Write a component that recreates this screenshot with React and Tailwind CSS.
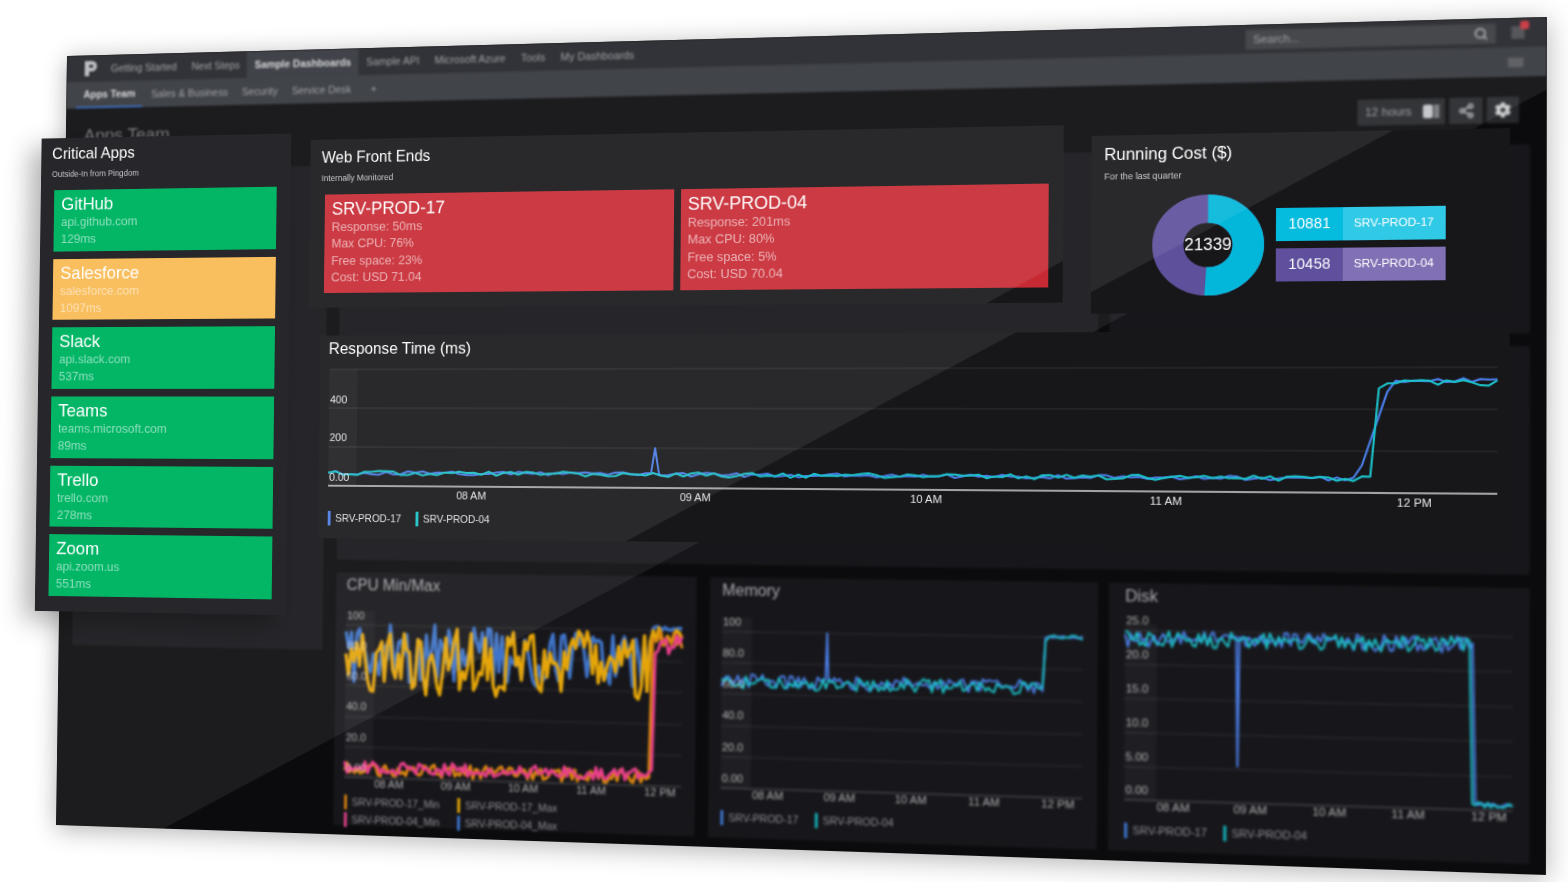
import React from 'react';
import { Search, Share2 } from 'lucide-react';
import { FaCog } from 'react-icons/fa';

// the whole dashboard is laid out flat, then tilted into the reference quad
const SCENE =
  'absolute left-0 top-0 w-[1480px] h-[810px] origin-top-left [transform:matrix3d(0.89196,-0.02754,0,-0.00006982,-0.01405,0.94247,0,-0.00000837,0,0,1,0,67,56,0,1)]';

const APPS = [
  { name: 'GitHub', host: 'api.github.com', ms: '129ms', tone: 'bg-[#02b666]' },
  { name: 'Salesforce', host: 'salesforce.com', ms: '1097ms', tone: 'bg-[#f9be5d]' },
  { name: 'Slack', host: 'api.slack.com', ms: '537ms', tone: 'bg-[#02b666]' },
  { name: 'Teams', host: 'teams.microsoft.com', ms: '89ms', tone: 'bg-[#02b666]' },
  { name: 'Trello', host: 'trello.com', ms: '278ms', tone: 'bg-[#02b666]' },
  { name: 'Zoom', host: 'api.zoom.us', ms: '551ms', tone: 'bg-[#02b666]' },
];

const SERVERS = [
  { name: 'SRV-PROD-17', lines: ['Response: 50ms', 'Max CPU: 76%', 'Free space: 23%', 'Cost: USD 71.04'] },
  { name: 'SRV-PROD-04', lines: ['Response: 201ms', 'Max CPU: 80%', 'Free space: 5%', 'Cost: USD 70.04'] },
];

const BLUE = '#4a7de6';
const TEAL = '#1cc0c8';

const rng = (seed) => {
  let s = seed;
  const next = () => (s = (s * 16807) % 2147483647) / 2147483647;
  next();
  next();
  return next;
};

const series = (seed, n, w, fn) => {
  const r = rng(seed);
  return Array.from({ length: n }, (_, i) => {
    const t = i / (n - 1);
    return [+(t * w).toFixed(1), +fn(t, r).toFixed(1)];
  });
};

const spike = (points, x, peak, width = 4) => {
  const before = points.filter((p) => p[0] < x - width);
  const after = points.filter((p) => p[0] > x + width);
  const base = before[before.length - 1][1];
  return [...before, [x - width, base], [x, peak], [x + width, base], ...after];
};

const lerp = (a, b, t) => a + (b - a) * t;

const responseBlue = spike(
  series(91231, 150, 1145, (t, r) => {
    if (t < 0.889) return 106.500 + (r() - 0.5) * 4;
    if (t < 0.916) return lerp(106.500, 12, (t - 0.889) / 0.027);
    return 12 + (r() - 0.4) * 4;
  }),
  340,
  80
);
const responseTeal = series(44021, 150, 1145, (t, r) => {
  if (t < 0.9) return 106.500 + (r() - 0.5) * 5;
  if (t < 0.907) return 20;
  return 15 + (r() - 0.5) * 6;
});

const cpuBlue = series(7741, 120, 348, (t, r) => (t < 0.91 ? 12 + r() * 62 : 10 + r() * 4));
const cpuAmber = series(31337, 120, 348, (t, r) => (t < 0.91 ? 16 + r() * 68 : 11 + r() * 14));
const cpuOrange = series(5501, 130, 348, (t, r) => (t < 0.91 ? 155 + r() * 13 : 14 + r() * 18));
const cpuPink = series(2287, 130, 348, (t, r) => (t < 0.915 ? 153 + r() * 13 : 14 + r() * 24));

const memBlue = spike(
  series(66123, 130, 353, (t, r) => (t < 0.897 ? 63 + (r() - 0.5) * 14 : 14 + (r() - 0.5) * 3)),
  105,
  14,
  1.5
);
const memTeal = series(18211, 130, 353, (t, r) => (t < 0.897 ? 64 + (r() - 0.5) * 14 : t < 0.905 ? 18 : 14 + (r() - 0.5) * 4));

const diskBlue = spike(
  series(52177, 130, 357, (t, r) => (t < 0.905 ? 14 + (r() - 0.5) * 16 : 165 + (r() - 0.5) * 5)),
  106,
  135,
  1.5
);
const diskTeal = series(83009, 130, 357, (t, r) => (t < 0.897 ? 14 + (r() - 0.5) * 16 : 165 + (r() - 0.5) * 5));

const toPoints = (pts) => pts.map((p) => p.join(',')).join(' ');

function Chart({ w, h, grids, axis, ticks, times, labelY, lines, gutter, strong }) {
  return (
    <svg width={w} height={h} className="block overflow-visible">
      <rect x="0" y="0" width={gutter} height={axis} fill="#ffffff" fillOpacity="0.035" />
      {grids.map((y) => (
        <line key={y} x1="0" x2={w} y1={y} y2={y} stroke="#ffffff" strokeOpacity="0.11" />
      ))}
      <line x1="0" x2={w} y1={axis} y2={axis} stroke="#ffffff" strokeOpacity={strong ? 0.8 : 0.28} strokeWidth={strong ? 1.6 : 1} />
      {lines.map((l) => (
        <polyline key={l.color} points={toPoints(l.points)} fill="none" stroke={l.color} strokeWidth={l.width} strokeLinejoin="round" />
      ))}
      {ticks.map((t) => (
        <text key={t.label} x="1" y={t.y} dominantBaseline="middle" fontSize="11" fill="#e5e5e7" fillOpacity={strong ? 1 : 0.7}>
          {t.label}
        </text>
      ))}
      {times.map((x, i) => (
        <text key={x} x={x} y={labelY} textAnchor="middle" dominantBaseline="middle" fontSize="11" fill="#e5e5e7" fillOpacity={strong ? 1 : 0.7}>
          {['08 AM', '09 AM', '10 AM', '11 AM', '12 PM'][i]}
        </text>
      ))}
    </svg>
  );
}

function Legend({ color, label, dim, className }) {
  return (
    <div className={`flex items-center gap-[5px] text-[10.5px] leading-none ${dim ? 'text-[#8f8f93]' : 'text-[#e2e2e4]'} ${className || ''}`}>
      <span className={`block w-[3px] h-[15px] ${color}`} />
      {label}
    </div>
  );
}

const BOTTOM_GRIDS = [14, 45, 76, 108, 139];
const bottomTicks = (labels) => labels.map((label, i) => ({ label, y: [5, 36, 67, 98, 130, 161][i] }));

function SmallPanel({ title, width, offset, children, legend }) {
  return (
    <div className={`h-[259px] ${width} bg-[#17171b] pt-[3px] ${offset}`}>
      <h3 className="text-[16px] leading-[20px] text-[#a9a9ad] h-[37px]">{title}</h3>
      {children}
      {legend}
    </div>
  );
}

function BackWindow() {
  return (
    <div className="absolute inset-0 overflow-hidden bg-[#0b0b0d] shadow-[0_4px_24px_rgba(0,0,0,0.3)]">
      <div className="relative h-full blur-[1.2px]">
        <div className="flex h-[28px] bg-[#24252a] text-[10.8px] text-[#9a9ca1] items-center pl-[18px] pr-[20px]">
          <svg width="17" height="18" viewBox="0 0 17 18" className="mr-[6px] shrink-0">
            <path d="M2 1h8a5.500 5.500 0 0 1 0 11H7v5H2z M7 5v3h3a1.500 1.500 0 0 0 0-3z" fill="#b9babd" fillRule="evenodd" />
          </svg>
          <span className="px-[8px]">Getting Started</span>
          <span className="px-[8px]">Next Steps</span>
          <span className="h-full flex items-center bg-[#33363c] px-[8px] font-bold text-[#d4d5d8]">Sample Dashboards</span>
          <span className="px-[8px]">Sample API</span>
          <span className="px-[8px]">Microsoft Azure</span>
          <span className="px-[8px]">Tools</span>
          <span className="px-[8px]">My Dashboards</span>
          <div className="ml-auto w-[230px] h-[19px] mr-[1px] bg-[#3a3b40] flex items-center justify-between px-[7px] text-[#9a9ca1]">
            Search...
            <Search size={13} strokeWidth={3} className="text-[#a9aaad]" />
          </div>
          <div className="relative ml-[13px] w-[12px] h-[12px] bg-[#4a4b50]">
            <span className="absolute -top-[5px] left-[8px] w-[8px] h-[8px] rounded-[2px] bg-[#c8323c]" />
          </div>
        </div>
        <div className="flex h-[28px] bg-[#34373d] text-[10.8px] text-[#9a9ca1] items-center pl-[11px] pr-[21px]">
          <span className="h-full flex items-center px-[8px] font-bold text-[#d4d5d8] border-b-2 border-[#2f62b8]">Apps Team</span>
          <span className="px-[7.500px] ml-[2px]">Sales &amp; Business</span>
          <span className="px-[7.500px]">Security</span>
          <span className="px-[7.500px]">Service Desk</span>
          <span className="px-[7.500px] ml-[6px]">+</span>
          <span className="ml-auto w-[14px] h-[9px] bg-[#55575c]" />
        </div>

        <div className="px-[15px]">
          <div className="flex justify-between h-[65px] pt-[19px] pr-[10px]">
            <h2 className="ml-[5px] text-[19px] leading-[20px] text-[#77777b]">Apps Team</h2>
            <div className="flex gap-[4px] h-[25px] text-[#b4b5b8]">
              <div className="w-[80px] bg-[#26272b] flex items-center justify-between pl-[7px] pr-[5px] text-[11px] text-[#9a9ca1]">
                12 hours
                <span className="flex h-[13px] gap-[1px]">
                  <span className="block w-[9px] bg-[#c4c5c8] rounded-[2px]" />
                  <span className="block w-[5px] bg-[#77787c]" />
                </span>
              </div>
              <div className="w-[30px] bg-[#26272b] flex items-center justify-center">
                <Share2 size={15} strokeWidth={2.4} />
              </div>
              <div className="w-[29px] bg-[#26272b] flex items-center justify-center">
                <FaCog size={15} className="text-[#cfd0d2]" />
              </div>
            </div>
          </div>

          <div className="flex gap-[14px]">
            <div className="w-[273px] h-[500px] bg-[#17171b]" />
            <div className="w-[1164px] flex flex-col">
              <div className="flex gap-[11px] h-[179px]">
                <div className="w-[765px] bg-[#17171b]" />
                <div className="w-[388px] bg-[#17171b]" />
              </div>
              <div className="h-[216px] mt-[12px] bg-[#17171b]" />
              <div className="flex mt-[13px] h-[259px] blur-[0.6px]">
                <SmallPanel
                  title={<span className="pl-[11px]">CPU Min/Max</span>}
                  width="w-[373px]"
                  legend={
                    <div className="grid grid-cols-[119px_1fr] gap-y-[3px] pl-[11px] mt-[-2px]">
                      <Legend dim color="bg-[#c9780f]" label="SRV-PROD-17_Min" />
                      <Legend dim color="bg-[#d9a008]" label="SRV-PROD-17_Max" />
                      <Legend dim color="bg-[#d93f82]" label="SRV-PROD-04_Min" />
                      <Legend dim color="bg-[#3b6fc4]" label="SRV-PROD-04_Max" />
                    </div>
                  }
                >
                  <div className="pl-[11px]">
                    <Chart
                      w={348}
                      h={190}
                      grids={BOTTOM_GRIDS}
                      axis={170}
                      gutter={30}
                      labelY={177}
                      ticks={bottomTicks(['100', '80.0', '60.0', '40.0', '20.0', '0.00'])}
                      times={[47, 117, 187, 257, 327]}
                      lines={[
                        { color: '#3f74c8', points: cpuBlue, width: 3.4 },
                        { color: '#e5a50a', points: cpuAmber, width: 3.4 },
                        { color: '#d9860f', points: cpuOrange, width: 3 },
                        { color: '#e83e8c', points: cpuPink, width: 3 },
                      ]}
                    />
                  </div>
                </SmallPanel>
                <SmallPanel
                  title={<span className="pl-[12px]">Memory</span>}
                  width="w-[379px]"
                  offset="ml-[14px]"
                  legend={
                    <div className="flex gap-[16px] pl-[12px] mt-[2px]">
                      <Legend dim color="bg-[#3b6fc4]" label="SRV-PROD-17" />
                      <Legend dim color="bg-[#12a5ab]" label="SRV-PROD-04" />
                    </div>
                  }
                >
                  <div className="pl-[12px]">
                    <Chart
                      w={353}
                      h={190}
                      grids={BOTTOM_GRIDS}
                      axis={170}
                      gutter={30}
                      labelY={177}
                      ticks={bottomTicks(['100', '80.0', '60.0', '40.0', '20.0', '0.00'])}
                      times={[47, 118, 188, 259, 330]}
                      lines={[
                        { color: BLUE, points: memBlue, width: 1.9 },
                        { color: TEAL, points: memTeal, width: 1.9 },
                      ]}
                    />
                  </div>
                </SmallPanel>
                <SmallPanel
                  title={<span className="pl-[15px]">Disk</span>}
                  width="w-[387px]"
                  offset="ml-[11px]"
                  legend={
                    <div className="flex gap-[15px] pl-[15px] mt-[2px]">
                      <Legend dim color="bg-[#3b6fc4]" label="SRV-PROD-17" />
                      <Legend dim color="bg-[#12a5ab]" label="SRV-PROD-04" />
                    </div>
                  }
                >
                  <div className="pl-[15px]">
                    <Chart
                      w={357}
                      h={190}
                      grids={[6, 39, 72, 105, 138]}
                      axis={170}
                      gutter={30}
                      labelY={177}
                      ticks={[
                        { label: '25.0', y: -3 },
                        { label: '20.0', y: 30 },
                        { label: '15.0', y: 63 },
                        { label: '10.0', y: 96 },
                        { label: '5.00', y: 129 },
                        { label: '0.00', y: 161 },
                      ]}
                      times={[46, 118, 191, 263, 336]}
                      lines={[
                        { color: BLUE, points: diskBlue, width: 1.9 },
                        { color: TEAL, points: diskTeal, width: 1.9 },
                      ]}
                    />
                  </div>
                </SmallPanel>
              </div>
            </div>
          </div>
        </div>
      </div>
      {/* glass reflection across the window */}
      <div className="absolute inset-0 bg-white/[0.065] pointer-events-none [clip-path:polygon(0_0,1480px_0,1480px_69px,118px_810px,0_810px)]" />
    </div>
  );
}

function AppCard({ app }) {
  return (
    <div className={`h-[64.700px] pl-[8px] pt-[5px] ${app.tone}`}>
      <div className="text-[18.500px] leading-[20px] text-white">{app.name}</div>
      <div className="text-[13px] leading-[18px] text-white/55">{app.host}</div>
      <div className="text-[13px] leading-[18px] text-white/55">{app.ms}</div>
    </div>
  );
}

function FrontPanels() {
  return (
    <div className="absolute left-[-27px] top-[87px] w-[1474px] flex blur-[0.4px]">
      <section className="w-[274px] h-[499px] shrink-0 bg-[#27272b] px-[15px] shadow-[-12px_10px_26px_rgba(0,0,0,0.3)]">
        <div className="h-[55px] pt-[6px] -ml-[3px]">
          <h3 className="text-[16.500px] leading-[20px] text-white">Critical Apps</h3>
          <p className="mt-[6px] text-[8.700px] leading-[12px] text-[#c8c8cb]">Outside-In from Pingdom</p>
        </div>
        <div className="flex flex-col gap-2">
          {APPS.map((app) => (
            <AppCard key={app.name} app={app} />
          ))}
        </div>
      </section>

      <div className="ml-[21px] w-[1179px] shrink-0">
        <div className="flex h-[192px]">
          <section className="relative mt-[7px] w-[764px] h-[174px] bg-[#17171a] pl-[16px] pr-[14px]">
            <div className="h-[57px] pt-[9px] -ml-[4px]">
              <h3 className="text-[16px] leading-[20px] text-white">Web Front Ends</h3>
              <p className="mt-[5px] text-[8.700px] leading-[12px] text-[#c8c8cb]">Internally Monitored</p>
            </div>
            <div className="grid grid-cols-2 gap-[7px]">
              {SERVERS.map((s) => (
                <div key={s.name} className="h-[102px] bg-[#c82a34] pl-[7.500px] pt-[5px]">
                  <div className="text-[18px] leading-[20px] text-white">{s.name}</div>
                  {s.lines.map((l) => (
                    <div key={l} className="text-[12.800px] leading-[17.300px] text-white/60">
                      {l}
                    </div>
                  ))}
                </div>
              ))}
            </div>
            <div className="absolute inset-0 bg-white/[0.08] pointer-events-none [clip-path:polygon(0_0,764px_0,764px_133px,691px_174px,0_174px)]" />
          </section>

          <section className="relative ml-[27px] mt-[18px] w-[388px] h-[174px] bg-[#17171a]">
            <div className="h-[59px] pt-[9px] pl-[12px]">
              <h3 className="text-[16px] leading-[20px] text-white">Running Cost ($)</h3>
              <p className="mt-[5px] text-[8.700px] leading-[12px] text-[#c8c8cb]">For the last quarter</p>
            </div>
            <div className="flex items-center pl-[58px]">
              <div className="relative w-[105px] h-[98px]">
                <svg viewBox="0 0 100 100" preserveAspectRatio="none" className="block w-full h-full">
                  <circle cx="50" cy="50" r="36" fill="none" stroke="#5f509c" strokeWidth="28" />
                  <circle
                    cx="50"
                    cy="50"
                    r="36"
                    fill="none"
                    stroke="#03b7da"
                    strokeWidth="28"
                    pathLength="100"
                    strokeDasharray="51 49"
                    transform="rotate(-90 50 50)"
                  />
                </svg>
                <span className="absolute inset-0 flex items-center justify-center text-[16px] text-white">21339</span>
              </div>
              <div className="ml-[11px] flex flex-col gap-[7px] w-[156px]">
                <div className="flex h-[32px] items-center bg-[#30c9e6] text-white">
                  <span className="w-[62px] h-full flex items-center justify-center bg-[#05bcde] text-[14px]">10881</span>
                  <span className="pl-[10px] text-[11px]">SRV-PROD-17</span>
                </div>
                <div className="flex h-[32px] items-center bg-[#8170b4] text-white">
                  <span className="w-[62px] h-full flex items-center justify-center bg-[#5f4f9d] text-[14px]">10458</span>
                  <span className="pl-[10px] text-[11px]">SRV-PROD-04</span>
                </div>
              </div>
            </div>
            <div className="absolute inset-0 bg-white/[0.08] pointer-events-none [clip-path:polygon(0_0,282px_0,0_153px)]" />
          </section>
        </div>

        <section className="relative mt-[18px] ml-[13px] w-[1166px] h-[209px] bg-[#17171a] pt-[3px]">
          <h3 className="pl-[9px] h-[32px] text-[16.300px] leading-[20px] text-white">Response Time (ms)</h3>
          <div className="pl-[10px]">
            <Chart
              strong
              w={1145}
              h={138}
              grids={[0, 40, 80]}
              axis={120}
              gutter={30}
              labelY={130}
              ticks={[
                { label: '400', y: 32 },
                { label: '200', y: 71 },
                { label: '0.00', y: 112.500 },
              ]}
              times={[151, 381, 610, 840, 1070]}
              lines={[
                { color: BLUE, points: responseBlue, width: 2 },
                { color: TEAL, points: responseTeal, width: 2 },
              ]}
            />
          </div>
          <div className="flex gap-[15px] pl-[10px] mt-[8px]">
            <Legend color="bg-[#4a7de6]" label="SRV-PROD-17" />
            <Legend color="bg-[#1cc0c8]" label="SRV-PROD-04" />
          </div>
          <div className="absolute inset-0 bg-white/[0.08] pointer-events-none [clip-path:polygon(0_0,706px_0,321px_209px,0_209px)]" />
        </section>
      </div>
    </div>
  );
}

export default function App() {
  return (
    <div className="relative w-[1568px] h-[882px] overflow-hidden bg-white font-['Liberation_Sans',Arial,sans-serif]">
      <div className={SCENE}>
        <BackWindow />
        <FrontPanels />
      </div>
    </div>
  );
}
